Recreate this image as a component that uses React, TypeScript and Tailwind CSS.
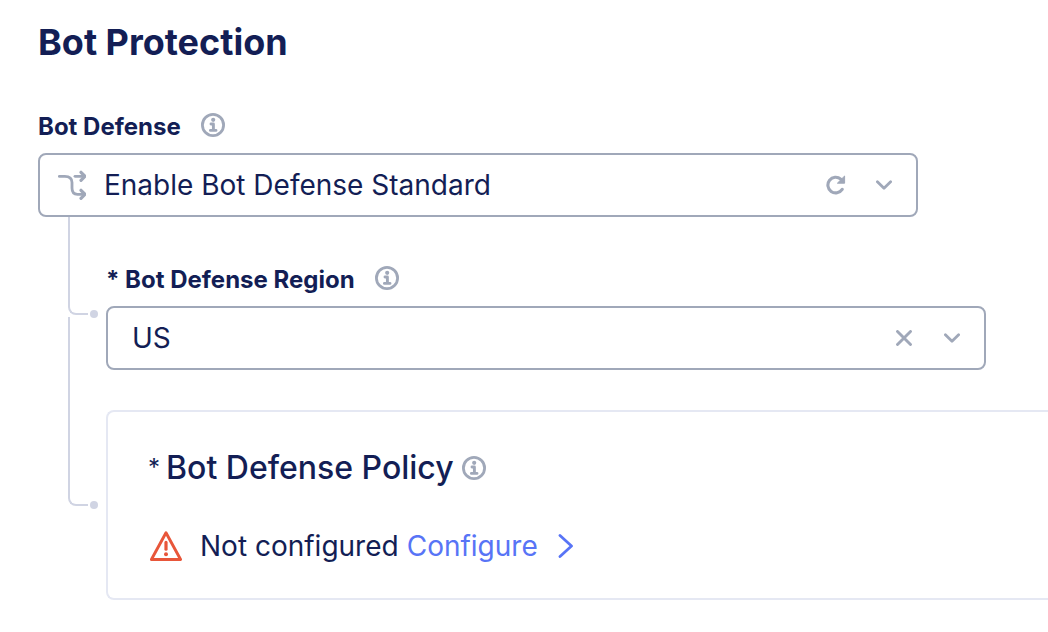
import type { ReactNode } from 'react';

function InfoIcon() {
  return (
    <svg width="24" height="24" viewBox="0 0 24 24" fill="none" aria-hidden="true">
      <circle cx="12" cy="12" r="10.6" stroke="#a0a8b9" strokeWidth="2.8" />
      <circle cx="12.2" cy="6.8" r="2.1" fill="#a0a8b9" />
      <path d="M10 11h2.4v6.200M9.400 17.400h5.600" stroke="#a0a8b9" strokeWidth="2.900" strokeLinecap="round" strokeLinejoin="round" />
    </svg>
  );
}

function BranchIcon() {
  return (
    <svg width="28" height="30" viewBox="0 0 28 30" fill="none" stroke="#a0a8b9" strokeWidth="2.8" strokeLinecap="round" strokeLinejoin="round" aria-hidden="true">
      <path d="M1.300 6.300h5.500C12 6.300 14 9 14 12.500v5.500C14 22.400 16 24.300 19.500 24.300h6.500" />
      <path d="M17 6.300h9" />
      <path d="M23 2.300l4 4-4 4M23 20.300l4 4-4 4" strokeWidth="3.200" />
    </svg>
  );
}

function ReloadIcon() {
  return (
    <svg width="20" height="20" viewBox="0 0 20 20" fill="none" aria-hidden="true">
      <path d="M16.200 14.400A7.800 7.800 0 1 1 14.800 4.200" stroke="#a0a8b9" strokeWidth="3.100" strokeLinecap="round" />
      <path d="M18.600 1v7.200h-7.200z" fill="#a0a8b9" stroke="#a0a8b9" strokeLinejoin="round" />
    </svg>
  );
}

function ChevronDownIcon() {
  return (
    <svg width="16" height="10" viewBox="0 0 16 10" fill="none" stroke="#a0a8b9" strokeWidth="2.800" strokeLinecap="round" strokeLinejoin="round" aria-hidden="true">
      <path d="M1.400 1.800L8 8.300l6.600-6.500" />
    </svg>
  );
}

function CloseIcon() {
  return (
    <svg width="16" height="16" viewBox="0 0 16 16" fill="none" stroke="#a0a8b9" strokeWidth="2.900" strokeLinecap="round" aria-hidden="true">
      <path d="M1.500 1.500l13 13M14.500 1.500l-13 13" />
    </svg>
  );
}

function WarningIcon() {
  return (
    <svg width="32" height="30" viewBox="0 0 32 30" fill="none" stroke="#e8563a" aria-hidden="true">
      <path d="M16 1.800L30.600 28.500H1.400z" strokeWidth="2.900" strokeLinejoin="round" />
      <path d="M16 11.400v6.800" strokeWidth="3.200" strokeLinecap="round" />
      <circle cx="16" cy="23.300" r="2" fill="#e8563a" stroke="none" />
    </svg>
  );
}

interface SelectFieldProps {
  id: string;
  label: string;
  value: string;
  icon?: ReactNode;
  action: ReactNode;
  actionLabel: string;
}

function SelectField({ id, label, value, icon, action, actionLabel }: SelectFieldProps) {
  return (
    <div className="max-w-[880px]">
      <div className="mb-2.5 flex h-8 items-center gap-5">
        <label htmlFor={id} className="text-[24px] leading-8 font-bold">{label}</label>
        <button type="button" aria-label={`About ${label}`} className="pb-1">
          <InfoIcon />
        </button>
      </div>
      <div className={`flex items-center h-16 rounded-lg border-2 border-[#a0a8b9] bg-white pr-6 ${icon ? 'pl-[18px]' : 'pl-6'}`}>
        {icon && <span className="mr-[18px]">{icon}</span>}
        <select id={id} defaultValue={value} className="flex-1 min-w-0 h-full appearance-none bg-transparent text-[28px] outline-none">
          <option>{value}</option>
        </select>
        <button type="button" aria-label={actionLabel} className="mr-6 flex w-8 justify-center">
          {action}
        </button>
        <ChevronDownIcon />
      </div>
    </div>
  );
}

function Connector({ className }: { className: string }) {
  return (
    <div className={`flex items-end ${className}`}>
      <div className="h-full w-5 rounded-bl-lg border-b-2 border-l-2 border-[#d0d4e3]" />
      <span className="ml-0.5 -mb-[3px] size-2 rounded-full bg-[#d0d4e3]" />
    </div>
  );
}

export default function App() {
  return (
    <main className="overflow-hidden bg-white pt-5 pb-8 pl-[38px] font-['Inter',sans-serif] text-[#131e55]">
      <h1 className="mb-[47px] text-[36px] leading-[44px] font-bold">Bot Protection</h1>

      <SelectField
        id="bot-defense"
        label="Bot Defense"
        value="Enable Bot Defense Standard"
        icon={<BranchIcon />}
        action={<ReloadIcon />}
        actionLabel="Reset"
      />

      <div className="flex">
        <div className="w-[68px] shrink-0 pl-[30px]">
          <Connector className="h-[98px]" />
          <Connector className="mt-0.5 h-[189px]" />
        </div>

        <div className="min-w-0 flex-1 pt-[47px]">
          <SelectField
            id="bot-defense-region"
            label="* Bot Defense Region"
            value="US"
            action={<CloseIcon />}
            actionLabel="Clear"
          />

          <section className="mt-10 rounded-l-lg border-2 border-r-0 border-[#e5e8f3] px-10 pt-9 pb-8">
            <div className="flex items-center gap-2">
              <h2 className="flex items-center gap-1.5 text-[32px] leading-10 font-medium">
                <span className="text-[24px] font-normal">*</span>
                Bot Defense Policy
              </h2>
              <button type="button" aria-label="About Bot Defense Policy">
                <InfoIcon />
              </button>
            </div>
            <div className="mt-[38px] flex items-center pl-0.5 text-[28px] leading-10">
              <WarningIcon />
              <span className="ml-[18px]">Not configured</span>
              <a href="#configure" className="ml-2 flex items-center gap-5 text-[#5874f6]">
                Configure
                <svg width="16" height="24" viewBox="0 0 16 24" fill="none" stroke="currentColor" strokeWidth="2.800" strokeLinecap="round" strokeLinejoin="round" aria-hidden="true">
                  <path d="M2 1.500L13.500 12 2 22.500" />
                </svg>
              </a>
            </div>
          </section>
        </div>
      </div>
    </main>
  );
}
